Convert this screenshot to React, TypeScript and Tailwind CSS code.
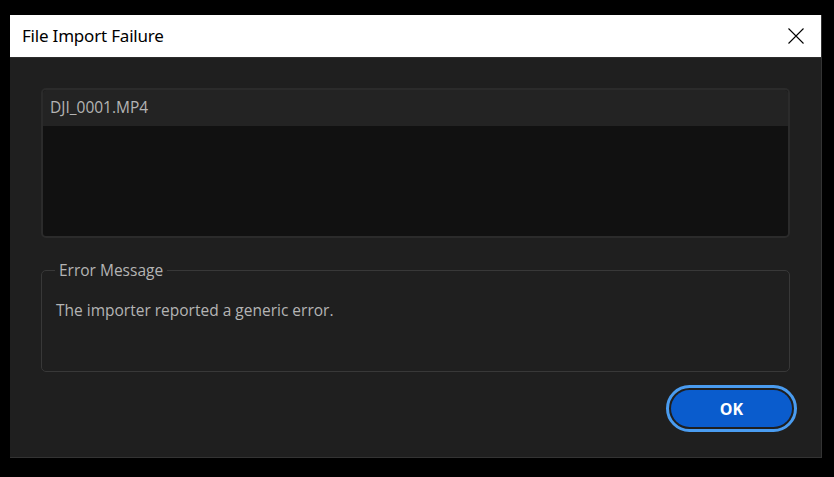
export default function App() {
  return (
    <div className="w-[834px] h-[477px] bg-black pt-[15px] pl-[10px] font-['Open_Sans',sans-serif]">
      <div className="w-[812px] h-[443px] flex flex-col bg-[#1f1f1f] border-r border-b border-[#333333]">
        {/* title bar */}
        <div className="h-[43px] shrink-0 bg-white flex items-center justify-between pl-[12px] pr-[17px] border-b border-[#2c2c2c]">
          <span className="text-[17px] text-black font-['Noto_Sans',sans-serif] tracking-[-0.2px]">File Import Failure</span>
          <svg width="16" height="16" viewBox="0 0 16 16" className="text-black">
            <path d="M0.5 0.5 L15.5 15.5 M15.5 0.5 L0.5 15.5" stroke="currentColor" strokeWidth="1.1" />
          </svg>
        </div>

        <div className="flex flex-col px-[31px] pt-[30px]">
          {/* file list */}
          <div className="h-[150px] rounded-[5px] border-2 border-[#2b2b2b] bg-[#111111] overflow-hidden">
            <div className="h-[36px] bg-[#232323] flex items-center pl-[7px] text-[15.5px] text-[#b4b4b4]">
              DJI_0001.MP4
            </div>
          </div>

          {/* error message */}
          <fieldset className="mt-[22px] h-[112px] rounded-[5px] border border-[#383838] px-[13px] pb-0">
            <legend className="px-[4px] text-[15.5px] text-[#b4b4b4] leading-[20px]">Error Message</legend>
            <p className="mt-[20px] ml-[1px] text-[15.5px] text-[#b4b4b4] leading-[20px]">
              The importer reported a generic error.
            </p>
          </fieldset>

          <div className="flex justify-end mt-[18px]">
            <button className="w-[121px] h-[37px] mr-[-2px] rounded-full bg-[#0a5ccd] text-white text-[16px] font-bold outline-[3px] outline-solid outline-[#4a9cf0] outline-offset-[2px]">
              OK
            </button>
          </div>
        </div>
      </div>
    </div>
  );
}
